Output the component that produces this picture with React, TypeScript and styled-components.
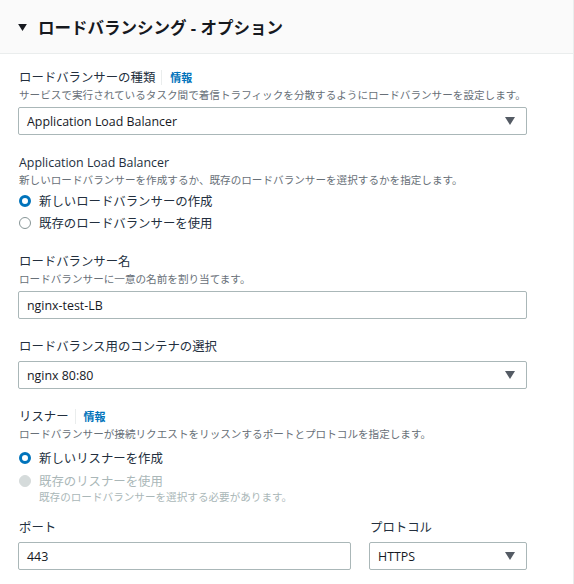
import styled, { createGlobalStyle } from "styled-components";

const GlobalStyle = createGlobalStyle`
  html, body {
    margin: 0;
    padding: 0;
    background: #fff;
  }
  body {
    font-family: "Open Sans", "Noto Sans CJK JP", sans-serif;
    color: #16191f;
  }
`;

const InfoLink = () => <Info>情報</Info>;

const SelectBox = ({ value, width }: { value: string; width?: number }) => (
  <Box $width={width}>
    <span>{value}</span>
    <Caret viewBox="0 0 10 8">
      <path d="M0 0 H10 L5 8 Z" fill="#545b64" />
    </Caret>
  </Box>
);

export default function App() {
  return (
    <>
      <GlobalStyle />
      <Card>
        <Header>
          <HeaderCaret viewBox="0 0 10 8">
            <path d="M0 0 H10 L5 8 Z" fill="#16191f" />
          </HeaderCaret>
          <Title>ロードバランシング - オプション</Title>
        </Header>
        <Body>
          <Field>
            <Label>
              ロードバランサーの種類
              <Divider />
              <InfoLink />
            </Label>
            <Desc>サービスで実行されているタスク間で着信トラフィックを分散するようにロードバランサーを設定します。</Desc>
            <Control>
              <SelectBox value="Application Load Balancer" />
            </Control>
          </Field>

          <Field>
            <Label>Application Load Balancer</Label>
            <Desc>新しいロードバランサーを作成するか、既存のロードバランサーを選択するかを指定します。</Desc>
            <RadioGroup>
              <RadioRow>
                <Radio $checked />
                新しいロードバランサーの作成
              </RadioRow>
              <RadioRow>
                <Radio />
                既存のロードバランサーを使用
              </RadioRow>
            </RadioGroup>
          </Field>

          <Field>
            <Label>ロードバランサー名</Label>
            <Desc>ロードバランサーに一意の名前を割り当てます。</Desc>
            <Control>
              <Box>nginx-test-LB</Box>
            </Control>
          </Field>

          <Field>
            <Label $solo>ロードバランス用のコンテナの選択</Label>
            <Control>
              <SelectBox value="nginx 80:80" />
            </Control>
          </Field>

          <Field>
            <Label>
              リスナー
              <Divider />
              <InfoLink />
            </Label>
            <Desc>ロードバランサーが接続リクエストをリッスンするポートとプロトコルを指定します。</Desc>
            <RadioGroup $offset={3}>
              <RadioRow $height={23}>
                <Radio $checked />
                新しいリスナーを作成
              </RadioRow>
              <RadioRow $height={23} $disabled>
                <Radio $disabled />
                既存のリスナーを使用
              </RadioRow>
              <SubDesc>既存のロードバランサーを選択する必要があります。</SubDesc>
            </RadioGroup>
          </Field>

          <Columns>
            <Field>
              <Label $solo>ポート</Label>
              <Control>
                <Box>443</Box>
              </Control>
            </Field>
            <Field>
              <Label $solo>プロトコル</Label>
              <Control>
                <SelectBox value="HTTPS" />
              </Control>
            </Field>
          </Columns>
        </Body>
      </Card>
    </>
  );
}

const Card = styled.div`
  width: 573px;
  height: 584px;
  border-right: 1px solid #eaeded;
  overflow: hidden;
`;

const Header = styled.div`
  height: 53px;
  display: flex;
  align-items: center;
  padding-left: 18px;
  background: #fafafa;
  border-bottom: 1px solid #eaeded;
`;

const HeaderCaret = styled.svg`
  width: 9px;
  height: 7px;
  margin-right: 11px;
  margin-top: 1px;
`;

const Title = styled.h2`
  margin: 0;
  font-size: 16.5px;
  font-weight: 700;
  color: #16191f;
`;

const Body = styled.div`
  padding: 14px 0 0 18px;
  width: 509px;
  display: flex;
  flex-direction: column;
  gap: 18px;
`;

const Field = styled.div`
  display: flex;
  flex-direction: column;
`;

const Label = styled.div<{ $solo?: boolean }>`
  display: flex;
  align-items: center;
  height: 18px;
  padding-left: 1px;
  font-size: 12.4px;
  color: #232f3e;
  margin-bottom: ${(p) => (p.$solo ? "3px" : "0")};
`;

const Divider = styled.span`
  display: inline-block;
  width: 1px;
  height: 15px;
  background: #eaeded;
  margin: 0 8px 0 6px;
`;

const Info = styled.span`
  color: #0073bb;
  font-weight: 700;
  font-size: 11px;
`;

const Desc = styled.div`
  height: 18px;
  line-height: 18px;
  padding-left: 1px;
  font-size: 10.6px;
  color: #687078;
  white-space: nowrap;
`;

const Control = styled.div`
  margin-top: 3px;
`;

const Box = styled.div<{ $width?: number }>`
  box-sizing: border-box;
  height: 28px;
  width: ${(p) => (p.$width ? `${p.$width}px` : "100%")};
  border: 1px solid #aab7b8;
  border-radius: 2px;
  padding: 0 10px 0 8px;
  display: flex;
  align-items: center;
  justify-content: space-between;
  font-size: 12.4px;
  color: #16191f;
  background: #fff;
`;

const Caret = styled.svg`
  width: 10px;
  height: 8px;
  margin-right: 1px;
`;

const RadioGroup = styled.div<{ $offset?: number }>`
  display: flex;
  flex-direction: column;
  margin-top: ${(p) => p.$offset ?? 1}px;
`;

const RadioRow = styled.div<{ $disabled?: boolean; $height?: number }>`
  display: flex;
  align-items: center;
  height: ${(p) => p.$height ?? 22}px;
  font-size: 12.4px;
  color: ${(p) => (p.$disabled ? "#aab7b8" : "#232f3e")};
`;

const Radio = styled.span<{ $checked?: boolean; $disabled?: boolean }>`
  box-sizing: border-box;
  width: 12px;
  height: 12px;
  border-radius: 50%;
  margin: 0 8px 0 1px;
  background: ${(p) => (p.$disabled ? "#d5dbdb" : "#fff")};
  border: ${(p) =>
    p.$checked
      ? "3.5px solid #0073bb"
      : p.$disabled
      ? "1px solid #d5dbdb"
      : "1px solid #879596"};
`;

const SubDesc = styled.div`
  padding-left: 21px;
  margin-top: -3px;
  height: 16px;
  line-height: 16px;
  font-size: 10.6px;
  color: #aab7b8;
`;

const Columns = styled.div`
  display: grid;
  grid-template-columns: 333px 158px;
  column-gap: 18px;
  margin-top: -5px;
`;
